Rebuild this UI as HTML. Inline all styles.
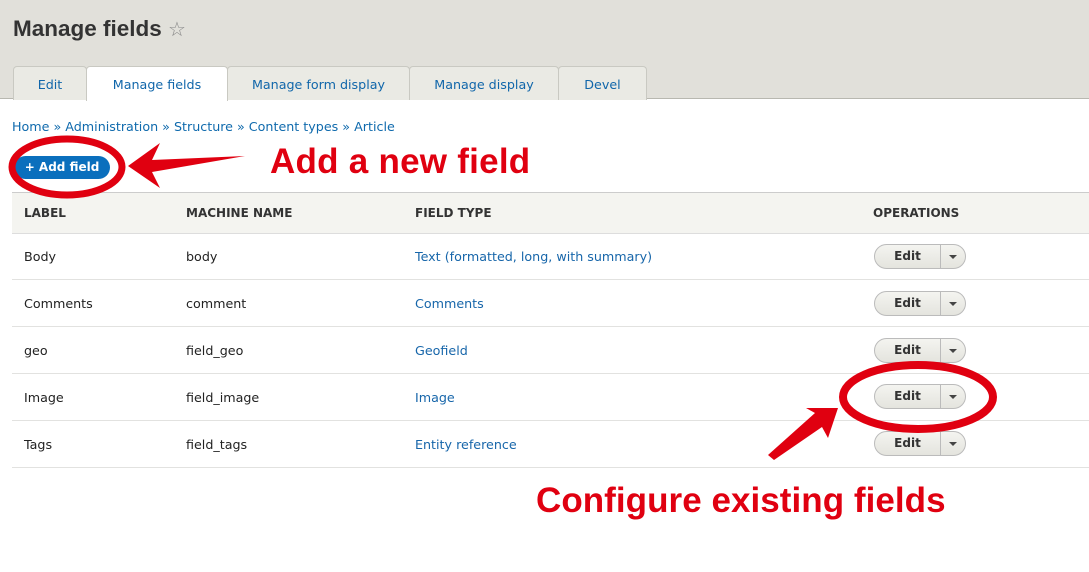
<!DOCTYPE html>
<html><head><meta charset="utf-8"><style>
*{margin:0;padding:0;box-sizing:border-box}
body{width:1089px;height:572px;background:#fff;font-family:"DejaVu Sans","Liberation Sans",sans-serif;position:relative;overflow:hidden;color:#222}
.hdr{position:absolute;left:0;top:0;width:1089px;height:99px;background:#e1e0da;border-bottom:1px solid #b8b8b0}
h1{position:absolute;left:13px;top:16px;font-size:22.5px;font-weight:bold;color:#333;font-family:"Liberation Sans",sans-serif}
.tab{position:absolute;top:66px;height:34px;background:#eaeae4;border:1px solid #c9c9c2;border-bottom:none;border-radius:4px 4px 0 0;color:#1066aa;font-size:12.7px;text-align:center;line-height:35px}
.tab.a{background:#fff;height:35px}
.bc{position:absolute;left:12px;top:119px;font-size:12.7px;color:#0f6aad}
.btn{position:absolute;left:14px;top:156px;width:96px;height:23px;background:#0a6fbd;border-radius:12px;color:#fff;font-size:12px;font-weight:bold;text-align:center;line-height:23px}
.th{position:absolute;left:12px;top:192px;width:1077px;height:42px;background:#f4f4f0;border-top:1px solid #ccc;border-bottom:1px solid #ddd}
.c{position:absolute;font-size:12.7px}
.hd{font-size:12px;font-weight:bold;color:#333}
.row{position:absolute;left:12px;width:1077px;border-bottom:1px solid #e2e2e0}
a{color:#1766aa;text-decoration:none}
.eb{position:absolute;left:874px;width:92px;height:25px;border:1px solid #bbb;border-radius:13px;background:linear-gradient(#f4f4f0,#e4e4de);font-size:12px;font-weight:bold;color:#333}
.eb span{position:absolute;left:0;width:65px;text-align:center;line-height:23px}
.eb i{position:absolute;left:65px;top:0;height:23px;border-left:1px solid #bbb}
.eb b{position:absolute;left:74px;top:10px;border:4px solid transparent;border-top:4px solid #444;border-bottom:none}
.red{position:absolute;color:#e00010;font-weight:bold;font-size:35px;font-family:"Liberation Sans",sans-serif;text-shadow:0 0 3px #fff,1px 1px 2px #fff}
</style></head><body>
<div class="hdr"></div>
<h1>Manage fields <span style="font-weight:normal;color:#888;font-size:20px">☆</span></h1>
<div class="tab" style="left:13px;width:74px">Edit</div>
<div class="tab a" style="left:86px;width:142px">Manage fields</div>
<div class="tab" style="left:227px;width:183px">Manage form display</div>
<div class="tab" style="left:409px;width:150px">Manage display</div>
<div class="tab" style="left:558px;width:89px">Devel</div>
<div class="bc">Home » Administration » Structure » Content types » Article</div>
<div class="btn">+ Add field</div>
<div class="th"></div>
<div class="c hd" style="left:24px;top:206px">LABEL</div>
<div class="c hd" style="left:186px;top:206px">MACHINE NAME</div>
<div class="c hd" style="left:415px;top:206px">FIELD TYPE</div>
<div class="c hd" style="left:873px;top:206px">OPERATIONS</div>

<div class="row" style="top:233px;height:47px"></div>
<div class="row" style="top:280px;height:47px"></div>
<div class="row" style="top:327px;height:47px"></div>
<div class="row" style="top:374px;height:47px"></div>
<div class="row" style="top:421px;height:47px"></div>

<div class="c" style="left:24px;top:249px">Body</div><div class="c" style="left:186px;top:249px">body</div><div class="c" style="left:415px;top:249px"><a>Text (formatted, long, with summary)</a></div>
<div class="c" style="left:24px;top:296px">Comments</div><div class="c" style="left:186px;top:296px">comment</div><div class="c" style="left:415px;top:296px"><a>Comments</a></div>
<div class="c" style="left:24px;top:343px">geo</div><div class="c" style="left:186px;top:343px">field_geo</div><div class="c" style="left:415px;top:343px"><a>Geofield</a></div>
<div class="c" style="left:24px;top:390px">Image</div><div class="c" style="left:186px;top:390px">field_image</div><div class="c" style="left:415px;top:390px"><a>Image</a></div>
<div class="c" style="left:24px;top:437px">Tags</div><div class="c" style="left:186px;top:437px">field_tags</div><div class="c" style="left:415px;top:437px"><a>Entity reference</a></div>

<div class="eb" style="top:244px"><span>Edit</span><i></i><b></b></div>
<div class="eb" style="top:291px"><span>Edit</span><i></i><b></b></div>
<div class="eb" style="top:338px"><span>Edit</span><i></i><b></b></div>
<div class="eb" style="top:384px"><span>Edit</span><i></i><b></b></div>
<div class="eb" style="top:431px"><span>Edit</span><i></i><b></b></div>

<svg style="position:absolute;left:0;top:0" width="1089" height="572">
<ellipse cx="67" cy="167" rx="55" ry="28" fill="none" stroke="#e00010" stroke-width="7"/>
<polygon points="128,166 160,143 152,160 245,156 152,172 160,188" fill="#e00010"/>
<ellipse cx="918" cy="397" rx="75" ry="32" fill="none" stroke="#e00010" stroke-width="8"/>
<polygon points="768,455 815,413 806,408 838,408 828,438 822,427 774,460" fill="#e00010"/>
</svg>
<div class="red" style="left:270px;top:142px;letter-spacing:0.25px">Add a new field</div>
<div class="red" style="left:536px;top:481px;letter-spacing:0.05px">Configure existing fields</div>
</body></html>
